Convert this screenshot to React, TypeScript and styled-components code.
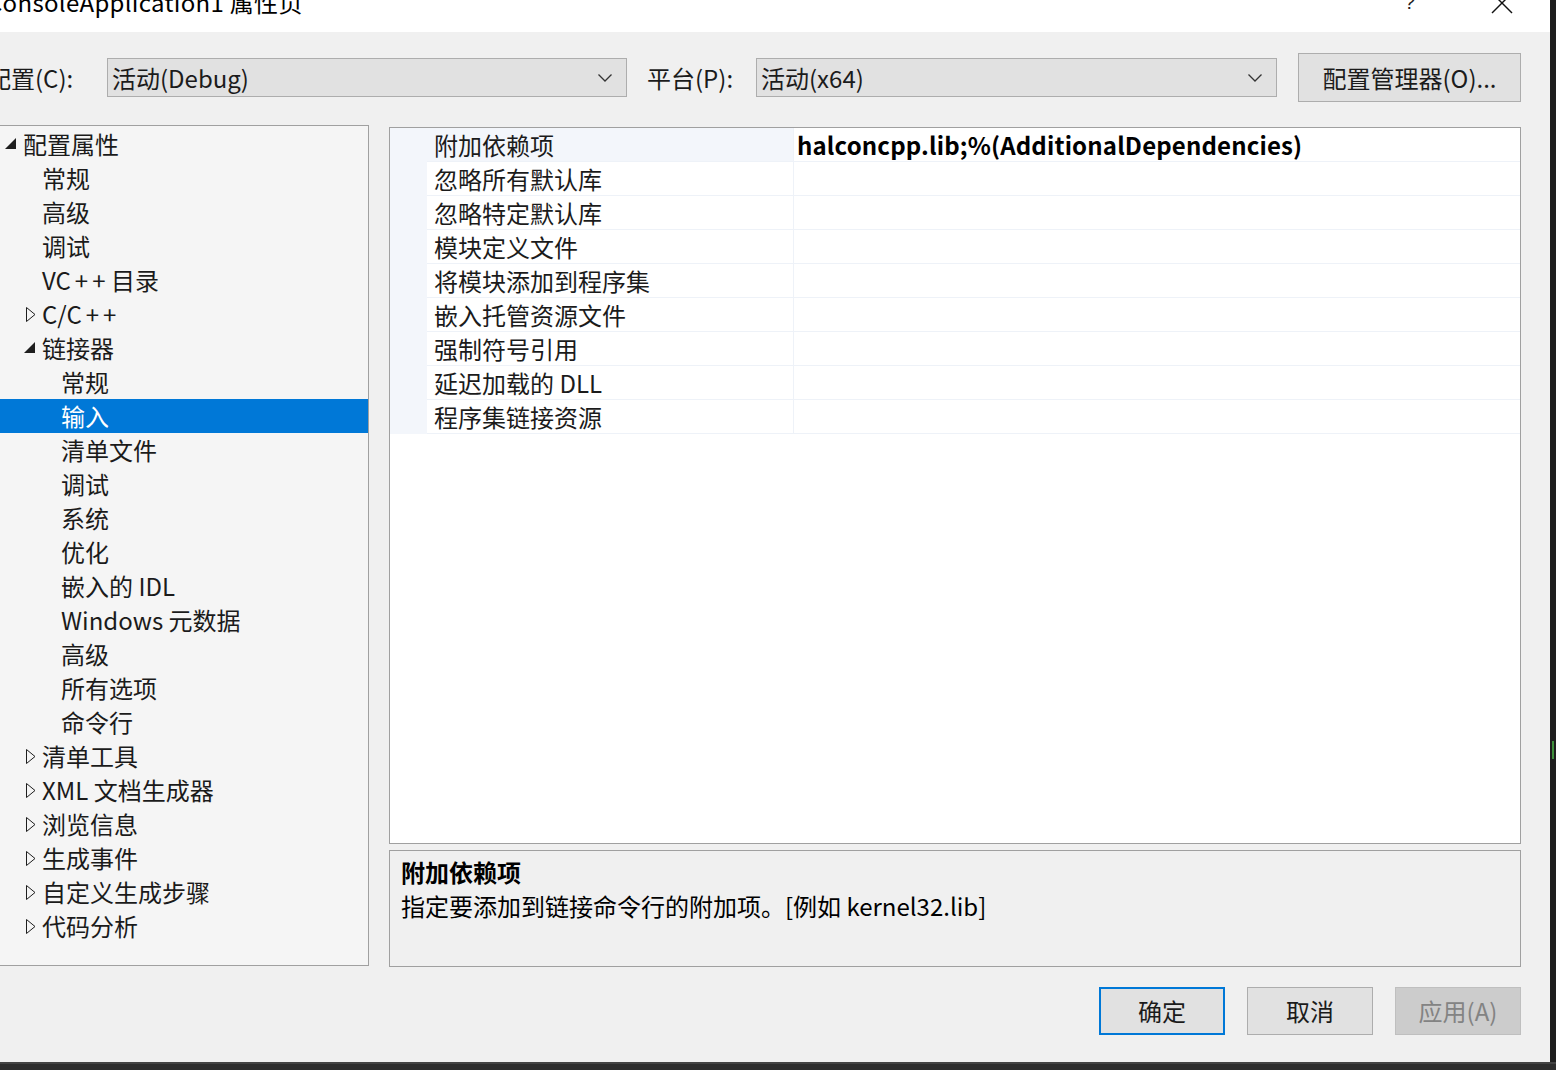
import React from 'react';
import styled, { createGlobalStyle } from 'styled-components';

const GlobalStyle = createGlobalStyle`
  html, body { margin: 0; padding: 0; background: #f0f0f0; }
  body {
    font-family: "Noto Sans CJK SC", "Noto Sans", sans-serif;
    color: #1b1b1b;
    overflow: hidden;
  }
  * { box-sizing: border-box; }
`;

const Screen = styled.div`
  width: 1556px;
  height: 1070px;
  overflow: hidden;
  display: grid;
  grid-template-rows: 1062px 8px;
  background: #f0f0f0;
`;

const UpperArea = styled.div`
  display: flex;
  overflow: hidden;
`;

const Dialog = styled.div`
  flex: none;
  width: 1598px;
  margin-left: -48px;
  padding: 0 29px;
  display: flex;
  flex-direction: column;
  background: #f0f0f0;
`;

const RightEdge = styled.div`
  flex: none;
  width: 6px;
  background: #1e1e1e;
  position: relative;
`;

const EdgeMark = styled.div`
  position: absolute;
  left: 2px;
  top: 741px;
  width: 2px;
  height: 18px;
  background: #3f8f3c;
`;

const BottomStrip = styled.div`
  background: #2d2d2d;
  border-top: 2px solid #434343;
`;

const TitleBar = styled.div`
  height: 32px;
  margin: 0 -29px;
  padding: 0 29px;
  background: #ffffff;
  display: flex;
  align-items: flex-start;
  overflow: hidden;
`;

const TitleText = styled.div`
  margin-left: 6px;
  margin-top: -10px;
  font-size: 24px;
  line-height: 24px;
  letter-spacing: 0.3px;
  color: #000;
  white-space: nowrap;
`;

const TitleSpacer = styled.div`
  flex: 1;
`;

const HelpGlyph = styled.div`
  margin-top: -9px;
  margin-right: 76px;
  font-family: "Liberation Sans", sans-serif;
  font-size: 20px;
  line-height: 22px;
  color: #222;
`;

const CloseIcon = styled.svg`
  margin-top: -8px;
  margin-right: 8px;
  flex: none;
`;

const TopRow = styled.div`
  margin-top: 21px;
  height: 49px;
  display: flex;
  align-items: center;
`;

const FieldLabel = styled.div<{ $w: number; $pad: number }>`
  flex: none;
  width: ${p => p.$w}px;
  padding-left: ${p => p.$pad}px;
  font-size: 24px;
  line-height: 34px;
  white-space: nowrap;
`;

const Combo = styled.div<{ $w: number }>`
  flex: none;
  width: ${p => p.$w}px;
  height: 39px;
  background: #e1e1e1;
  border: 1px solid #adadad;
  display: flex;
  align-items: center;
  padding: 0 14px 0 4px;
  font-size: 24px;
  line-height: 34px;
`;

const ComboValue = styled.span`
  flex: 1;
  white-space: nowrap;
`;

const ButtonGap = styled.div`
  flex: none;
  width: 21px;
`;

const PushButton = styled.button<{ $w: number; $variant?: 'default' | 'primary' | 'disabled' }>`
  flex: none;
  width: ${p => p.$w}px;
  height: ${p => (p.$variant ? 48 : 49)}px;
  margin: 0;
  padding: 0;
  font-family: "Noto Sans CJK SC", "Noto Sans", sans-serif;
  font-size: 24px;
  line-height: 34px;
  background: ${p => (p.$variant === 'disabled' ? '#cccccc' : '#e1e1e1')};
  color: ${p => (p.$variant === 'disabled' ? '#838383' : '#1b1b1b')};
  border: ${p =>
    p.$variant === 'primary'
      ? '2px solid #0078d7'
      : p.$variant === 'disabled'
      ? '1px solid #bfbfbf'
      : '1px solid #adadad'};
  white-space: nowrap;
`;

const MainArea = styled.div`
  margin-top: 23px;
  display: flex;
  gap: 20px;
  align-items: flex-start;
`;

const TreePanel = styled.div`
  flex: none;
  width: 388px;
  height: 841px;
  background: #f5f5f5;
  border: 1px solid #a0a0a0;
  padding-top: 1px;
`;

const TreeRow = styled.div<{ $level: number; $selected?: boolean }>`
  height: 34px;
  display: flex;
  align-items: center;
  padding-left: ${p => 23 + p.$level * 19}px;
  background: ${p => (p.$selected ? '#0078d7' : 'transparent')};
  color: ${p => (p.$selected ? '#ffffff' : '#1b1b1b')};
  font-size: 24px;
  line-height: 34px;
`;

const TreeLabel = styled.span`
  white-space: pre;
`;

const Plus = styled.span`
  margin-left: 4px;
`;

const ToggleSlot = styled.div`
  flex: none;
  width: 18px;
  height: 34px;
  display: flex;
  align-items: center;
`;

const RightColumn = styled.div`
  flex: 1;
  display: flex;
  flex-direction: column;
  gap: 6px;
  padding-top: 2px;
`;

const PropGrid = styled.div`
  height: 717px;
  background: #ffffff;
  border: 1px solid #a0a0a0;
`;

const PropRow = styled.div`
  display: grid;
  grid-template-columns: 37px 366px 1px 1fr;
  height: 34px;
`;

const Gutter = styled.div`
  background: #f3f6fb;
`;

const NameCell = styled.div<{ $active?: boolean }>`
  background: ${p => (p.$active ? '#f3f6fb' : '#ffffff')};
  border-bottom: 1px solid #eef2f8;
  padding-left: 7px;
  font-size: 24px;
  line-height: 33px;
  white-space: nowrap;
`;

const ColDivider = styled.div`
  background: #eef2f8;
`;

const ValueCell = styled.div<{ $bold?: boolean }>`
  border-bottom: 1px solid #eef2f8;
  padding-left: 3px;
  font-size: 24px;
  line-height: 33px;
  font-weight: ${p => (p.$bold ? 700 : 400)};
  letter-spacing: ${p => (p.$bold ? '0.15px' : '0')};
  color: #000;
  white-space: nowrap;
  overflow: hidden;
`;

const DescPanel = styled.div`
  height: 117px;
  border: 1px solid #a0a0a0;
  background: #f0f0f0;
  padding: 4px 11px 0;
`;

const DescTitle = styled.div`
  font-size: 24px;
  line-height: 34px;
  font-weight: 700;
  color: #000;
`;

const DescText = styled.div`
  font-size: 24px;
  line-height: 34px;
  color: #000;
`;

const ButtonRow = styled.div`
  margin-top: 20px;
  display: flex;
  justify-content: flex-end;
  gap: 22px;
`;

const ExpandedTriangle = () => (
  <svg width="11" height="11" viewBox="0 0 11 11" style={{ marginTop: -2 }}>
    <polygon points="11,0 11,11 0,11" fill="#1e1e1e" />
  </svg>
);

const CollapsedTriangle = () => (
  <svg width="10" height="15" viewBox="0 0 10 15" style={{ marginLeft: 2 }}>
    <polygon points="0.5,0.5 9,7.5 0.5,14.5" fill="none" stroke="#1e1e1e" strokeWidth="1" />
  </svg>
);

const Chevron = () => (
  <svg width="14" height="8" viewBox="0 0 14 8">
    <polyline points="0.5,0.5 7,7 13.5,0.5" fill="none" stroke="#333" strokeWidth="1.3" />
  </svg>
);

type TreeItem = { label: string; level: number; toggle?: 'open' | 'closed'; selected?: boolean };

const treeItems: TreeItem[] = [
  { label: '配置属性', level: 0, toggle: 'open' },
  { label: '常规', level: 1 },
  { label: '高级', level: 1 },
  { label: '调试', level: 1 },
  { label: 'VC++ 目录', level: 1 },
  { label: 'C/C++', level: 1, toggle: 'closed' },
  { label: '链接器', level: 1, toggle: 'open' },
  { label: '常规', level: 2 },
  { label: '输入', level: 2, selected: true },
  { label: '清单文件', level: 2 },
  { label: '调试', level: 2 },
  { label: '系统', level: 2 },
  { label: '优化', level: 2 },
  { label: '嵌入的 IDL', level: 2 },
  { label: 'Windows 元数据', level: 2 },
  { label: '高级', level: 2 },
  { label: '所有选项', level: 2 },
  { label: '命令行', level: 2 },
  { label: '清单工具', level: 1, toggle: 'closed' },
  { label: 'XML 文档生成器', level: 1, toggle: 'closed' },
  { label: '浏览信息', level: 1, toggle: 'closed' },
  { label: '生成事件', level: 1, toggle: 'closed' },
  { label: '自定义生成步骤', level: 1, toggle: 'closed' },
  { label: '代码分析', level: 1, toggle: 'closed' },
];

const props: { name: string; value: string }[] = [
  { name: '附加依赖项', value: 'halconcpp.lib;%(AdditionalDependencies)' },
  { name: '忽略所有默认库', value: '' },
  { name: '忽略特定默认库', value: '' },
  { name: '模块定义文件', value: '' },
  { name: '将模块添加到程序集', value: '' },
  { name: '嵌入托管资源文件', value: '' },
  { name: '强制符号引用', value: '' },
  { name: '延迟加载的 DLL', value: '' },
  { name: '程序集链接资源', value: '' },
];

// Renders "++" with the wider spacing seen in the dialog font.
const renderLabel = (label: string) => {
  const idx = label.indexOf('++');
  if (idx < 0) return <TreeLabel>{label}</TreeLabel>;
  return (
    <TreeLabel>
      {label.slice(0, idx)}
      <Plus>+</Plus>
      <Plus>+</Plus>
      {label.slice(idx + 2)}
    </TreeLabel>
  );
};

export default function App() {
  return (
    <Screen>
      <GlobalStyle />
      <UpperArea>
        <Dialog>
          <TitleBar>
            <TitleText>ConsoleApplication1 属性页</TitleText>
            <TitleSpacer />
            <HelpGlyph>?</HelpGlyph>
            <CloseIcon width="22" height="22" viewBox="0 0 22 22">
              <line x1="1" y1="1" x2="21" y2="21" stroke="#111" strokeWidth="1.4" />
              <line x1="21" y1="1" x2="1" y2="21" stroke="#111" strokeWidth="1.4" />
            </CloseIcon>
          </TitleBar>

          <TopRow>
            <FieldLabel $w={126} $pad={6}>配置(C):</FieldLabel>
            <Combo $w={520}>
              <ComboValue>活动(Debug)</ComboValue>
              <Chevron />
            </Combo>
            <FieldLabel $w={129} $pad={20}>平台(P):</FieldLabel>
            <Combo $w={521}>
              <ComboValue>活动(x64)</ComboValue>
              <Chevron />
            </Combo>
            <ButtonGap />
            <PushButton $w={223}>配置管理器(O)...</PushButton>
          </TopRow>

          <MainArea>
            <TreePanel>
              {treeItems.map((item, i) => (
                <TreeRow key={i} $level={item.level} $selected={item.selected}>
                  <ToggleSlot>
                    {item.toggle === 'open' && <ExpandedTriangle />}
                    {item.toggle === 'closed' && <CollapsedTriangle />}
                  </ToggleSlot>
                  {renderLabel(item.label)}
                </TreeRow>
              ))}
            </TreePanel>

            <RightColumn>
              <PropGrid>
                {props.map((p, i) => (
                  <PropRow key={i}>
                    <Gutter />
                    <NameCell $active={i === 0}>{p.name}</NameCell>
                    <ColDivider />
                    <ValueCell $bold={i === 0}>{p.value}</ValueCell>
                  </PropRow>
                ))}
              </PropGrid>
              <DescPanel>
                <DescTitle>附加依赖项</DescTitle>
                <DescText>指定要添加到链接命令行的附加项。[例如 kernel32.lib]</DescText>
              </DescPanel>
            </RightColumn>
          </MainArea>

          <ButtonRow>
            <PushButton $w={126} $variant="primary">确定</PushButton>
            <PushButton $w={126} $variant="default">取消</PushButton>
            <PushButton $w={126} $variant="disabled">应用(A)</PushButton>
          </ButtonRow>
        </Dialog>
        <RightEdge>
          <EdgeMark />
        </RightEdge>
      </UpperArea>
      <BottomStrip />
    </Screen>
  );
}
